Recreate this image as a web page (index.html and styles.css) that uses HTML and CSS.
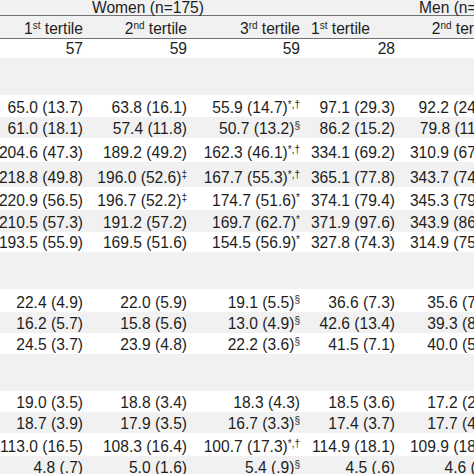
FILE: index.html
```html
<!DOCTYPE html>
<html>
<head>
<meta charset="utf-8">
<link rel="stylesheet" href="styles.css">
</head>
<body>
<div class="table">
  <div class="row grp gray">
    <div class="cell women">Women (n=175)</div>
    <div class="cell men">Men (n=85)</div>
  </div>
  <div class="row hdr gray">
    <div class="cell">1<sup>st</sup> tertile</div>
    <div class="cell">2<sup>nd</sup> tertile</div>
    <div class="cell">3<sup>rd</sup> tertile</div>
    <div class="cell hd-d">1<sup>st</sup> tertile</div>
    <div class="cell">2<sup>nd</sup> tertile</div>
  </div>
  <div class="row h19">
    <div class="cell">57</div><div class="cell">59</div><div class="cell">59</div><div class="cell">28</div><div class="cell">29</div>
  </div>
  <div class="row sec gray"></div>
  <div class="row h22">
    <div class="cell">65.0 (13.7)</div><div class="cell">63.8 (16.1)</div><div class="cell">55.9 (14.7)<sup>*,†</sup></div><div class="cell">97.1 (29.3)</div><div class="cell">92.2 (24.6)</div>
  </div>
  <div class="row h21 gray">
    <div class="cell">61.0 (18.1)</div><div class="cell">57.4 (11.8)</div><div class="cell">50.7 (13.2)<sup>§</sup></div><div class="cell">86.2 (15.2)</div><div class="cell">79.8 (11.9)</div>
  </div>
  <div class="row h24">
    <div class="cell">204.6 (47.3)</div><div class="cell">189.2 (49.2)</div><div class="cell">162.3 (46.1)<sup>*,†</sup></div><div class="cell">334.1 (69.2)</div><div class="cell">310.9 (67.2)</div>
  </div>
  <div class="row h25 gray">
    <div class="cell">218.8 (49.8)</div><div class="cell">196.0 (52.6)<sup>‡</sup></div><div class="cell">167.7 (55.3)<sup>*,†</sup></div><div class="cell">365.1 (77.8)</div><div class="cell">343.7 (74.1)</div>
  </div>
  <div class="row h23">
    <div class="cell">220.9 (56.5)</div><div class="cell">196.7 (52.2)<sup>‡</sup></div><div class="cell">174.7 (51.6)<sup>*</sup></div><div class="cell">374.1 (79.4)</div><div class="cell">345.3 (79.0)</div>
  </div>
  <div class="row h22 gray">
    <div class="cell">210.5 (57.3)</div><div class="cell">191.2 (57.2)</div><div class="cell">169.7 (62.7)<sup>*</sup></div><div class="cell">371.9 (97.6)</div><div class="cell">343.9 (86.5)</div>
  </div>
  <div class="row h19">
    <div class="cell">193.5 (55.9)</div><div class="cell">169.5 (51.6)</div><div class="cell">154.5 (56.9)<sup>*</sup></div><div class="cell">327.8 (74.3)</div><div class="cell">314.9 (75.2)</div>
  </div>
  <div class="row sec gray"></div>
  <div class="row h23">
    <div class="cell">22.4 (4.9)</div><div class="cell">22.0 (5.9)</div><div class="cell">19.1 (5.5)<sup>§</sup></div><div class="cell">36.6 (7.3)</div><div class="cell">35.6 (7.4)</div>
  </div>
  <div class="row h21 gray">
    <div class="cell">16.2 (5.7)</div><div class="cell">15.8 (5.6)</div><div class="cell">13.0 (4.9)<sup>§</sup></div><div class="cell">42.6 (13.4)</div><div class="cell">39.3 (8.8)</div>
  </div>
  <div class="row h21">
    <div class="cell">24.5 (3.7)</div><div class="cell">23.9 (4.8)</div><div class="cell">22.2 (3.6)<sup>§</sup></div><div class="cell">41.5 (7.1)</div><div class="cell">40.0 (5.9)</div>
  </div>
  <div class="row sec gray"></div>
  <div class="row h21">
    <div class="cell">19.0 (3.5)</div><div class="cell">18.8 (3.4)</div><div class="cell">18.3 (4.3)</div><div class="cell">18.5 (3.6)</div><div class="cell">17.2 (2.9)</div>
  </div>
  <div class="row h21 gray">
    <div class="cell">18.7 (3.9)</div><div class="cell">17.9 (3.5)</div><div class="cell">16.7 (3.3)<sup>§</sup></div><div class="cell">17.4 (3.7)</div><div class="cell">17.7 (4.1)</div>
  </div>
  <div class="row h23">
    <div class="cell">113.0 (16.5)</div><div class="cell">108.3 (16.4)</div><div class="cell">100.7 (17.3)<sup>*,†</sup></div><div class="cell">114.9 (18.1)</div><div class="cell">109.9 (18.3)</div>
  </div>
  <div class="row h21 gray">
    <div class="cell">4.8 (.7)</div><div class="cell">5.0 (1.6)</div><div class="cell">5.4 (.9)<sup>§</sup></div><div class="cell">4.5 (.6)</div><div class="cell">4.6 (.8)</div>
  </div>
</div>
</body>
</html>
```

FILE: styles.css
```css
html, body {
  margin: 0;
  padding: 0;
  background: #ffffff;
}

body {
  width: 474px;
  height: 474px;
  overflow: hidden;
  font-family: "Liberation Sans", Arial, sans-serif;
  color: #1e1e1e;
}

.table {
  margin-left: -20px;
  width: 514px;
  font-size: 15.6px;
}

.row {
  display: grid;
  grid-template-columns: 103px 104px 113px 95px 99px;
  align-items: end;
  box-sizing: border-box;
  line-height: 16px;
  padding-bottom: 1px;
}

.gray {
  background: #f1f1f1;
}

.cell {
  text-align: right;
  white-space: nowrap;
}

sup {
  font-size: 10px;
  line-height: 0;
  vertical-align: 5.5px;
}

.grp {
  height: 15.5px;
  line-height: 14px;
  padding-bottom: 0;
  border-bottom: 1.5px solid #727272;
}

.women {
  grid-column: 1 / 4;
  text-align: center;
  padding-left: 16px;
}

.men {
  grid-column: 4 / 6;
  text-align: left;
  padding-left: 119px;
}

.hdr {
  height: 23px;
  border-bottom: 1.5px solid #727272;
}

.hd-d {
  padding-right: 25px;
}

.sec { height: 37px; }
.h19 { height: 19.5px; }
.h21 { height: 21px; }
.h22 { height: 22px; }
.h23 { height: 23px; }
.h24 { height: 24px; }
.h25 { height: 25px; }
```
